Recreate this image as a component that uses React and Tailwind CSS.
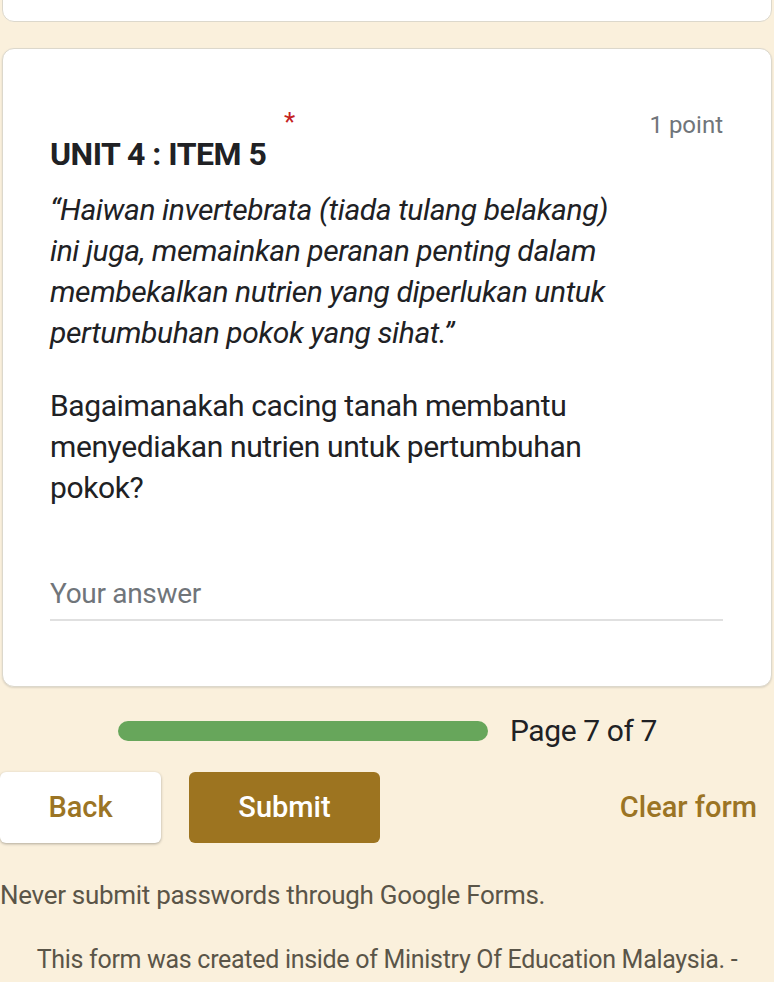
import React from 'react';

const font = { fontFamily: 'Roboto, "Noto Sans", Arial, sans-serif' };

const quoteLines = [
  '“Haiwan invertebrata (tiada tulang belakang)',
  'ini juga, memainkan peranan penting dalam',
  'membekalkan nutrien yang diperlukan untuk',
  'pertumbuhan pokok yang sihat.”',
];

const questionLines = [
  'Bagaimanakah cacing tanah membantu',
  'menyediakan nutrien untuk pertumbuhan',
  'pokok?',
];

const App = () => {
  return (
    <div style={font} className="w-[774px] h-[982px] overflow-hidden bg-[#faf0dc]">
      {/* bottom of previous card */}
      <div className="mx-[2px] -mt-[20px] h-[42px] bg-white rounded-b-[12px] border border-[#dcd8cc]" />

      {/* question card */}
      <div className="mx-[2px] mt-[26px] h-[639px] bg-white rounded-[12px] border border-[#dcd8cc] shadow-[0_1px_2px_rgba(0,0,0,0.12)] pl-[47px] pr-[48px] pt-[85px]">
        <div className="flex justify-between items-start">
          <div className="relative">
            <h2 className="text-[32px] leading-[40px] font-bold text-[#202124] tracking-[-0.5px]">UNIT 4 : ITEM 5</h2>
            <span className="absolute left-[234px] -top-[31px] text-[26px] text-[#c5221f]">*</span>
          </div>
          <span className="text-[24px] leading-[30px] text-[#70757a] -mt-[24px]">1 point</span>
        </div>

        <div className="mt-[15px] text-[30px] leading-[41px] italic text-[#202124] tracking-[-0.4px]">
          {quoteLines.map((l) => (
            <div key={l} className="whitespace-nowrap">{l}</div>
          ))}
        </div>

        <div className="mt-[32px] text-[30px] leading-[41px] text-[#202124] tracking-[-0.4px]">
          {questionLines.map((l) => (
            <div key={l} className="whitespace-nowrap">{l}</div>
          ))}
        </div>

        <div className="mt-[69px] w-full border-b-2 border-[#e0e0e0] pb-[8px]">
          <span className="text-[28px] leading-[34px] text-[#70757a] tracking-[-0.3px]">Your answer</span>
        </div>
      </div>

      {/* progress */}
      <div className="flex items-center mt-[26px] pl-[118px]">
        <div className="w-[370px] h-[20px] rounded-full bg-[#67a65b]" />
        <span className="ml-[22px] text-[30px] leading-[36px] text-[#202124] tracking-[-0.4px]">Page 7 of 7</span>
      </div>

      {/* buttons */}
      <div className="flex items-center mt-[23px] pr-[17px]">
        <button className="w-[161px] h-[71px] bg-white rounded-[6px] shadow-[0_1px_3px_rgba(0,0,0,0.3)] text-[29px] font-medium text-[#9b7424]">
          Back
        </button>
        <button className="ml-[28px] w-[191px] h-[71px] bg-[#9d7420] rounded-[6px] text-[29px] font-medium text-white">
          Submit
        </button>
        <span className="ml-auto text-[29px] font-medium text-[#9b7424]">Clear form</span>
      </div>

      {/* footer */}
      <p className="mt-[37px] text-[26px] leading-[30px] text-[#5a5548] tracking-[-0.3px]">
        Never submit passwords through Google Forms.
      </p>
      <p className="mt-[33px] text-center text-[25px] leading-[34px] text-[#5a5548] tracking-[-0.3px]">
        This form was created inside of Ministry Of Education Malaysia. -
        <br />
        Contact form owner
      </p>
    </div>
  );
};

export default App;
